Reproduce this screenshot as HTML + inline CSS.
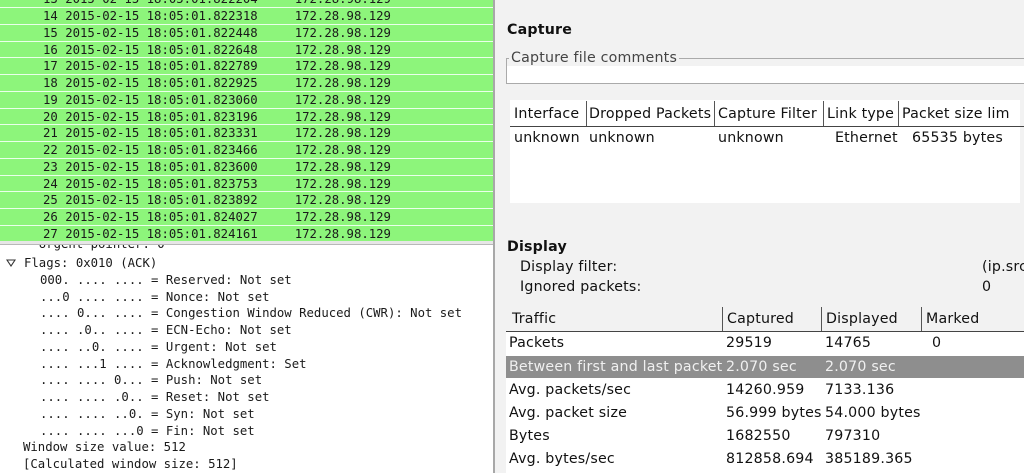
<!DOCTYPE html>
<html><head><meta charset="utf-8">
<style>
*{margin:0;padding:0;box-sizing:border-box}
body{width:1024px;height:473px;overflow:hidden;background:#f2f2f2;position:relative;font-family:"DejaVu Sans","Liberation Sans",sans-serif;}
.mono{font-family:"DejaVu Sans Mono","Liberation Mono",monospace;font-size:12.3px;color:#1a1a1a;white-space:pre;}
#list{position:absolute;left:0;top:0;width:493px;height:241px;background:#8df57b;overflow:hidden;}
.row{position:absolute;left:0;width:493px;height:16.77px;border-top:1px solid #eaffea;line-height:16px;padding-left:43px}
#gap{position:absolute;left:0;top:241px;width:493px;height:4px;background:#e6e6e6;border-bottom:1px solid #b8b8b8}
#det{position:absolute;left:0;top:245px;width:493px;height:228px;background:#fff;overflow:hidden}
.dl{position:absolute;line-height:16px}
#div{position:absolute;left:493px;top:0;width:2px;height:473px;background:#a8a8a8}
.s{position:absolute;font-size:14.2px;letter-spacing:0.2px;color:#111;white-space:nowrap;line-height:16px}
.b{font-weight:bold}
.box{position:absolute;background:#fff}
.vl{position:absolute;width:1px;background:#555}
</style></head><body>
<div id="list" class="mono">
<div class="row" style="top:-9.77px">13 2015-02-15 18:05:01.822204     172.28.98.129</div>
<div class="row" style="top:7px">14 2015-02-15 18:05:01.822318     172.28.98.129</div>
<div class="row" style="top:23.77px">15 2015-02-15 18:05:01.822448     172.28.98.129</div>
<div class="row" style="top:40.54px">16 2015-02-15 18:05:01.822648     172.28.98.129</div>
<div class="row" style="top:57.31px">17 2015-02-15 18:05:01.822789     172.28.98.129</div>
<div class="row" style="top:74.08px">18 2015-02-15 18:05:01.822925     172.28.98.129</div>
<div class="row" style="top:90.85px">19 2015-02-15 18:05:01.823060     172.28.98.129</div>
<div class="row" style="top:107.62px">20 2015-02-15 18:05:01.823196     172.28.98.129</div>
<div class="row" style="top:124.39px">21 2015-02-15 18:05:01.823331     172.28.98.129</div>
<div class="row" style="top:141.16px">22 2015-02-15 18:05:01.823466     172.28.98.129</div>
<div class="row" style="top:157.93px">23 2015-02-15 18:05:01.823600     172.28.98.129</div>
<div class="row" style="top:174.7px">24 2015-02-15 18:05:01.823753     172.28.98.129</div>
<div class="row" style="top:191.47px">25 2015-02-15 18:05:01.823892     172.28.98.129</div>
<div class="row" style="top:208.24px">26 2015-02-15 18:05:01.824027     172.28.98.129</div>
<div class="row" style="top:225.01px">27 2015-02-15 18:05:01.824161     172.28.98.129</div>
</div>
<div id="gap"></div>
<div id="det" class="mono">
<div class="dl" style="left:24px;top:-9px">  Urgent pointer: 0</div>
<svg style="position:absolute;left:6px;top:14px" width="10" height="8"><path d="M1 1 L9 1 L5 7 Z" fill="none" stroke="#333" stroke-width="1.1"/></svg>
<div class="dl" style="left:24px;top:10px">Flags: 0x010 (ACK)</div>
<div class="dl" style="left:40px;top:27px">000. .... .... = Reserved: Not set</div>
<div class="dl" style="left:40px;top:44px">...0 .... .... = Nonce: Not set</div>
<div class="dl" style="left:40px;top:60px">.... 0... .... = Congestion Window Reduced (CWR): Not set</div>
<div class="dl" style="left:40px;top:77px">.... .0.. .... = ECN-Echo: Not set</div>
<div class="dl" style="left:40px;top:94px">.... ..0. .... = Urgent: Not set</div>
<div class="dl" style="left:40px;top:111px">.... ...1 .... = Acknowledgment: Set</div>
<div class="dl" style="left:40px;top:127px">.... .... 0... = Push: Not set</div>
<div class="dl" style="left:40px;top:144px">.... .... .0.. = Reset: Not set</div>
<div class="dl" style="left:40px;top:161px">.... .... ..0. = Syn: Not set</div>
<div class="dl" style="left:40px;top:178px">.... .... ...0 = Fin: Not set</div>
<div class="dl" style="left:23px;top:194px">Window size value: 512</div>
<div class="dl" style="left:23px;top:211px">[Calculated window size: 512]</div>
</div>
<div id="div"></div>

<div class="s b" style="left:507px;top:22px">Capture</div>
<div style="position:absolute;left:506px;top:58px;width:530px;height:26px;border:1px solid #aaa;border-right:none"></div>
<div class="box" style="left:507px;top:66px;width:520px;height:17px"></div>
<div class="s" style="left:509px;top:50px;background:#f2f2f2;color:#444;padding:0 2px 0 2px">Capture file comments</div>

<div class="box" style="left:510px;top:100px;width:510px;height:103px"></div>
<div style="position:absolute;left:510px;top:126px;width:514px;height:1px;background:#444"></div>
<div class="vl" style="left:586px;top:101px;height:25px"></div>
<div class="vl" style="left:714px;top:101px;height:25px"></div>
<div class="vl" style="left:823px;top:101px;height:25px"></div>
<div class="vl" style="left:898px;top:101px;height:25px"></div>
<div class="s" style="left:514px;top:106px">Interface</div>
<div class="s" style="left:589px;top:106px">Dropped Packets</div>
<div class="s" style="left:718px;top:106px">Capture Filter</div>
<div class="s" style="left:827px;top:106px">Link type</div>
<div class="s" style="left:902px;top:106px">Packet size lim</div>
<div class="s" style="left:514px;top:130px">unknown</div>
<div class="s" style="left:589px;top:130px">unknown</div>
<div class="s" style="left:718px;top:130px">unknown</div>
<div class="s" style="left:835px;top:130px">Ethernet</div>
<div class="s" style="left:912px;top:130px">65535 bytes</div>

<div class="s b" style="left:507px;top:239px">Display</div>
<div class="s" style="left:520px;top:259px">Display filter:</div>
<div class="s" style="left:982px;top:259px">(ip.src</div>
<div class="s" style="left:520px;top:279px">Ignored packets:</div>
<div class="s" style="left:982px;top:279px">0</div>

<div class="box" style="left:506px;top:332px;width:518px;height:141px"></div>
<div style="position:absolute;left:506px;top:331px;width:518px;height:1px;background:#444"></div>
<div class="vl" style="left:722px;top:307px;height:24px"></div>
<div class="vl" style="left:821px;top:307px;height:24px"></div>
<div class="vl" style="left:921px;top:307px;height:24px"></div>
<div class="s" style="left:512px;top:311px">Traffic</div>
<div class="s" style="left:727px;top:311px">Captured</div>
<div class="s" style="left:826px;top:311px">Displayed</div>
<div class="s" style="left:926px;top:311px">Marked</div>
<div style="position:absolute;left:506px;top:356px;width:518px;height:22px;background:#8e8e8e"></div>
<div class="s" style="left:509px;top:335px">Packets</div><div class="s" style="left:726px;top:335px">29519</div><div class="s" style="left:825px;top:335px">14765</div><div class="s" style="left:932px;top:335px">0</div>
<div class="s" style="left:509px;top:359px;color:#f0f0f0">Between first and last packet</div><div class="s" style="left:726px;top:359px;color:#f0f0f0">2.070 sec</div><div class="s" style="left:825px;top:359px;color:#f0f0f0">2.070 sec</div>
<div class="s" style="left:509px;top:382px">Avg. packets/sec</div><div class="s" style="left:726px;top:382px">14260.959</div><div class="s" style="left:825px;top:382px">7133.136</div>
<div class="s" style="left:509px;top:405px">Avg. packet size</div><div class="s" style="left:726px;top:405px">56.999 bytes</div><div class="s" style="left:825px;top:405px">54.000 bytes</div>
<div class="s" style="left:509px;top:428px">Bytes</div><div class="s" style="left:726px;top:428px">1682550</div><div class="s" style="left:825px;top:428px">797310</div>
<div class="s" style="left:509px;top:451px">Avg. bytes/sec</div><div class="s" style="left:726px;top:451px">812858.694</div><div class="s" style="left:825px;top:451px">385189.365</div>
</body></html>
